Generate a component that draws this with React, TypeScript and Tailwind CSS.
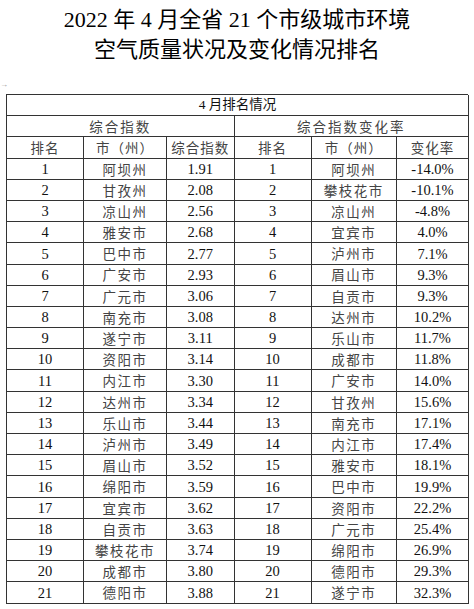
import React from 'react'

const left: [number, string, string][] = [
  [1, '阿坝州', '1.91'],
  [2, '甘孜州', '2.08'],
  [3, '凉山州', '2.56'],
  [4, '雅安市', '2.68'],
  [5, '巴中市', '2.77'],
  [6, '广安市', '2.93'],
  [7, '广元市', '3.06'],
  [8, '南充市', '3.08'],
  [9, '遂宁市', '3.11'],
  [10, '资阳市', '3.14'],
  [11, '内江市', '3.30'],
  [12, '达州市', '3.34'],
  [13, '乐山市', '3.44'],
  [14, '泸州市', '3.49'],
  [15, '眉山市', '3.52'],
  [16, '绵阳市', '3.59'],
  [17, '宜宾市', '3.62'],
  [18, '自贡市', '3.63'],
  [19, '攀枝花市', '3.74'],
  [20, '成都市', '3.80'],
  [21, '德阳市', '3.88'],
]

const right: [string, string][] = [
  ['阿坝州', '-14.0%'],
  ['攀枝花市', '-10.1%'],
  ['凉山州', '-4.8%'],
  ['宜宾市', '4.0%'],
  ['泸州市', '7.1%'],
  ['眉山市', '9.3%'],
  ['自贡市', '9.3%'],
  ['达州市', '10.2%'],
  ['乐山市', '11.7%'],
  ['成都市', '11.8%'],
  ['广安市', '14.0%'],
  ['甘孜州', '15.6%'],
  ['南充市', '17.1%'],
  ['内江市', '17.4%'],
  ['雅安市', '18.1%'],
  ['巴中市', '19.9%'],
  ['资阳市', '22.2%'],
  ['广元市', '25.4%'],
  ['绵阳市', '26.9%'],
  ['德阳市', '29.3%'],
  ['遂宁市', '32.3%'],
]

const cell = 'flex items-center justify-center border-r border-b border-[#333]'
const num = `${cell} font-['Liberation_Serif','Noto_Sans_CJK_SC',serif] text-[14.5px] text-[#111] pt-[2px]`
const cjk = `${cell} font-['Noto_Sans_CJK_SC',sans-serif] text-[13.5px] tracking-[1.5px] text-[#444]`

export default function App() {
  return (
    <div className="w-[474px] h-[609px] bg-white overflow-hidden">
      <div className="pt-[5px] text-center text-[22px] leading-[30px] text-black font-['Liberation_Serif','Noto_Sans_CJK_SC',serif]">
        <div>2022 年 4 月全省 21 个市级城市环境</div>
        <div>空气质量状况及变化情况排名</div>
      </div>
      <div className="h-[29px] pt-[15px] text-[8px] leading-none text-[#999]">→</div>
      <div className="ml-[6px] w-[462px] grid grid-cols-[77px_83px_67.5px_77px_85.5px_72px] auto-rows-[21.2px] border-l border-t border-[#333]">
        <div className={`${cell} col-span-6 font-['Liberation_Serif','Noto_Sans_CJK_SC',serif] text-[13.5px] text-[#111]`}>
          4 月排名情况
        </div>
        <div className={`${cjk} col-span-3 tracking-[2px]`}>综合指数</div>
        <div className={`${cjk} col-span-3 tracking-[2px]`}>综合指数变化率</div>
        <div className={`${cjk} tracking-[1px]`}>排名</div>
        <div className={`${cjk} tracking-[1px]`}>市（州）</div>
        <div className={`${cjk} tracking-[1px]`}>综合指数</div>
        <div className={`${cjk} tracking-[1px]`}>排名</div>
        <div className={`${cjk} tracking-[1px]`}>市（州）</div>
        <div className={`${cjk} tracking-[1px]`}>变化率</div>
        {left.map(([rank, city, idx], i) => (
          <React.Fragment key={rank}>
            <div className={num}>{rank}</div>
            <div className={cjk}>{city}</div>
            <div className={num}>{idx}</div>
            <div className={num}>{rank}</div>
            <div className={cjk}>{right[i][0]}</div>
            <div className={num}>{right[i][1]}</div>
          </React.Fragment>
        ))}
      </div>
    </div>
  )
}
